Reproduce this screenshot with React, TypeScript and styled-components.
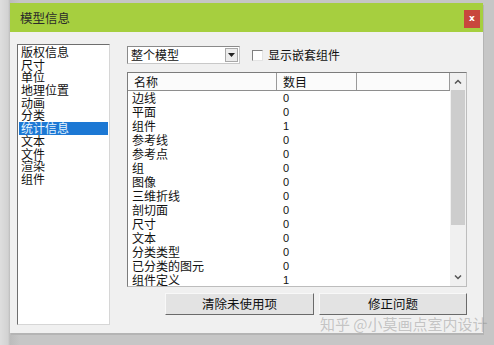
import React from "react"
import styled, { createGlobalStyle } from "styled-components"

const categories = [
  "版权信息",
  "尺寸",
  "单位",
  "地理位置",
  "动画",
  "分类",
  "统计信息",
  "文本",
  "文件",
  "渲染",
  "组件",
]

const stats: [string, string][] = [
  ["边线", "0"],
  ["平面", "0"],
  ["组件", "1"],
  ["参考线", "0"],
  ["参考点", "0"],
  ["组", "0"],
  ["图像", "0"],
  ["三维折线", "0"],
  ["剖切面", "0"],
  ["尺寸", "0"],
  ["文本", "0"],
  ["分类类型", "0"],
  ["已分类的图元", "0"],
  ["组件定义", "1"],
]

const App = () => {
  return (
    <Page>
      <GlobalStyle />
      <Window>
        <TitleBar>
          <Title>模型信息</Title>
          <CloseButton>x</CloseButton>
        </TitleBar>
        <Body>
          <SideList>
            {categories.map((c) => (
              <SideItem key={c} $active={c === "统计信息"}>
                {c}
              </SideItem>
            ))}
          </SideList>
          <Main>
            <Toolbar>
              <Select>
                <SelectText>整个模型</SelectText>
                <SelectArrow>
                  <svg width="7" height="4" viewBox="0 0 7 4">
                    <path d="M0 0h7L3.5 4z" fill="#222" />
                  </svg>
                </SelectArrow>
              </Select>
              <Check />
              <CheckLabel>显示嵌套组件</CheckLabel>
            </Toolbar>
            <Table>
              <TableContent>
                <HeaderRow>
                  <HeaderCell>名称</HeaderCell>
                  <HeaderCell>数目</HeaderCell>
                  <HeaderCell />
                </HeaderRow>
                {stats.map(([name, count]) => (
                  <Row key={name}>
                    <NameCell>{name}</NameCell>
                    <CountCell>{count}</CountCell>
                  </Row>
                ))}
              </TableContent>
              <Scrollbar>
                <ScrollArrow>
                  <svg width="8" height="5" viewBox="0 0 8 5">
                    <polyline points="1,4.5 4,1.5 7,4.5" fill="none" stroke="#555" strokeWidth="1.5" />
                  </svg>
                </ScrollArrow>
                <Thumb />
                <Track />
                <ScrollArrow>
                  <svg width="8" height="5" viewBox="0 0 8 5">
                    <polyline points="1,0.5 4,3.5 7,0.5" fill="none" stroke="#555" strokeWidth="1.5" />
                  </svg>
                </ScrollArrow>
              </Scrollbar>
            </Table>
            <Buttons>
              <Button $width={149}>清除未使用项</Button>
              <Button $width={148}>修正问题</Button>
            </Buttons>
          </Main>
        </Body>
      </Window>
      <Watermark>知乎 @小莫画点室内设计</Watermark>
    </Page>
  )
}

const GlobalStyle = createGlobalStyle`
  html, body {
    margin: 0;
    padding: 0;
  }
  body {
    background: #c4c4c4;
    font-family: "Noto Sans CJK SC", "Liberation Sans", sans-serif;
    color: #111;
  }
`

const Page = styled.div`
  position: relative;
  width: 494px;
  height: 345px;
  overflow: hidden;
  box-sizing: border-box;
  padding: 3px 0 0 10px;
  background: linear-gradient(to right, #dedede 0, #d2d2d2 8px, #bcbcbc 10px, #c6c6c6 20px);
`

const Window = styled.div`
  width: 473px;
  height: 330px;
  background: #f0f0f0;
  display: flex;
  flex-direction: column;
  box-shadow: 1px 2px 0 #b4b4b4;
`

const TitleBar = styled.div`
  height: 29px;
  flex: none;
  background: #a6cf3f;
  display: flex;
  justify-content: space-between;
  align-items: flex-start;
  padding: 0 3px 0 10px;
`

const Title = styled.div`
  font-size: 12.5px;
  line-height: 29px;
  color: #2b2b2b;
`

const CloseButton = styled.div`
  margin-top: 7px;
  width: 16px;
  height: 18px;
  background: #c8473d;
  color: #fff;
  font-family: "DejaVu Sans", sans-serif;
  font-weight: bold;
  font-size: 9px;
  line-height: 17px;
  text-align: center;
`

const Body = styled.div`
  flex: 1;
  display: flex;
  gap: 17px;
  padding: 12px 16px 0 7px;
`

const SideList = styled.div`
  width: 93px;
  height: 281px;
  box-sizing: border-box;
  background: #fff;
  border-top: 1px solid #6e6e6e;
  border-left: 1px solid #6e6e6e;
  border-right: 1px solid #d6d6d6;
  border-bottom: 1px solid #d6d6d6;
  padding: 1px;
`

const SideItem = styled.div<{ $active?: boolean }>`
  font-size: 12px;
  line-height: 12.7px;
  height: 12.7px;
  padding-left: 2px;
  white-space: nowrap;
  background: ${(p) => (p.$active ? "#1c78d4" : "transparent")};
  color: ${(p) => (p.$active ? "#e6f4ff" : "#111")};
`

const Main = styled.div`
  width: 340px;
  display: flex;
  flex-direction: column;
`

const Toolbar = styled.div`
  margin-top: 2px;
  height: 18px;
  display: flex;
  align-items: center;
`

const Select = styled.div`
  width: 113px;
  height: 18px;
  box-sizing: border-box;
  background: #fff;
  border: 1px solid #8a8a8a;
  border-right-color: #c8c8c8;
  border-bottom-color: #c8c8c8;
  display: flex;
  align-items: center;
  justify-content: space-between;
`

const SelectText = styled.span`
  font-size: 12px;
  line-height: 16px;
  padding-left: 3px;
`

const SelectArrow = styled.div`
  width: 13px;
  height: 14px;
  margin-right: 1px;
  box-sizing: border-box;
  background: #ececec;
  border: 1px solid #a8a8a8;
  display: flex;
  align-items: center;
  justify-content: center;
`

const Check = styled.div`
  width: 11px;
  height: 11px;
  margin-left: 12px;
  box-sizing: border-box;
  background: #fff;
  border-top: 1px solid #808080;
  border-left: 1px solid #808080;
  border-right: 1px solid #e4e4e4;
  border-bottom: 1px solid #e4e4e4;
`

const CheckLabel = styled.span`
  margin-left: 5px;
  font-size: 12px;
  line-height: 18px;
`

const Table = styled.div`
  margin-top: 8px;
  height: 215px;
  box-sizing: border-box;
  border: 1px solid #7c7c7c;
  border-right-color: #bdbdbd;
  border-bottom-color: #bdbdbd;
  background: #fff;
  display: flex;
`

const TableContent = styled.div`
  flex: 1;
  overflow: hidden;
`

const HeaderRow = styled.div`
  display: grid;
  grid-template-columns: 149px 80px 1fr;
  height: 17px;
  border-bottom: 1px solid #8e8e8e;
  background: #fbfbfb;
`

const HeaderCell = styled.div`
  font-size: 12px;
  line-height: 17px;
  padding-left: 6px;
  border-right: 1px solid #9a9a9a;
`

const Row = styled.div`
  display: grid;
  grid-template-columns: 149px 80px;
  height: 14px;
`

const NameCell = styled.div`
  font-size: 12px;
  line-height: 14px;
  padding-left: 4px;
  white-space: nowrap;
`

const CountCell = styled.div`
  font-family: "Liberation Sans", sans-serif;
  font-size: 11px;
  line-height: 14px;
  padding-left: 6px;
`

const Scrollbar = styled.div`
  width: 16px;
  display: flex;
  flex-direction: column;
  background: #f0f0f0;
`

const ScrollArrow = styled.div`
  height: 17px;
  display: flex;
  align-items: center;
  justify-content: center;
`

const Thumb = styled.div`
  height: 135px;
  margin: 0 1px;
  background: #cdcdcd;
`

const Track = styled.div`
  flex: 1;
`

const Buttons = styled.div`
  margin-top: 6px;
  display: flex;
  justify-content: flex-end;
  gap: 5px;
`

const Button = styled.div<{ $width: number }>`
  width: ${(p) => p.$width}px;
  height: 22px;
  box-sizing: border-box;
  background: #e3e3e3;
  border: 1px solid #f8f8f8;
  border-right-color: #6a6a6a;
  border-bottom-color: #6a6a6a;
  font-size: 12.5px;
  line-height: 20px;
  text-align: center;
`

const Watermark = styled.div`
  position: absolute;
  left: 320px;
  top: 315px;
  font-size: 15px;
  line-height: 18px;
  color: rgba(140, 140, 140, 0.45);
  white-space: nowrap;
`

export default App
